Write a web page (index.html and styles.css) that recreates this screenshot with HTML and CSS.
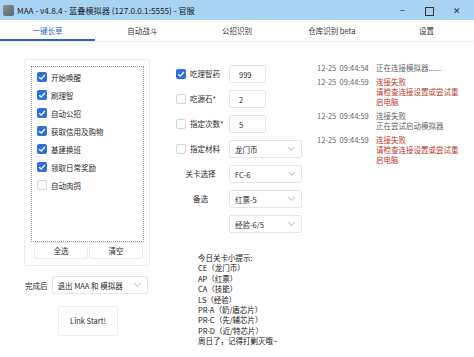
FILE: index.html
```html
<!DOCTYPE html>
<html lang="zh-CN">
<head>
  <meta charset="UTF-8">
  <title>MAA</title>
  <link rel="stylesheet" href="styles.css">
</head>
<body>

<!-- Title bar -->
<div class="titlebar">
  <div class="app-icon"></div>
  <div class="title">MAA - v4.8.4 - 蓝叠模拟器 (127.0.0.1:5555) - 官服</div>
  <div class="win-btns">
    <span class="win-btn">&#8722;</span>
    <span class="win-btn max"></span>
    <span class="win-btn">&#10005;</span>
  </div>
</div>

<!-- Tabs -->
<div class="tabs">
  <div class="tab active">一键长草</div>
  <div class="tab">自动战斗</div>
  <div class="tab">公招识别</div>
  <div class="tab">仓库识别 beta</div>
  <div class="tab">设置</div>
</div>

<div class="main">

  <!-- Task list -->
  <div class="left">
    <div class="task-card">
      <div class="task-list">
        <label class="check"><span class="box on"></span>开始唤醒</label>
        <label class="check"><span class="box on"></span>刷理智</label>
        <label class="check"><span class="box on"></span>自动公招</label>
        <label class="check"><span class="box on"></span>获取信用及购物</label>
        <label class="check"><span class="box on"></span>基建换班</label>
        <label class="check"><span class="box on"></span>领取日常奖励</label>
        <label class="check"><span class="box"></span>自动肉鸽</label>
      </div>
      <div class="task-btns">
        <div class="btn">全选</div>
        <div class="btn">清空</div>
      </div>
    </div>

    <div class="after">
      <span>完成后</span>
      <div class="select wide">退出 MAA 和 模拟器<span class="chev"></span></div>
    </div>

    <div class="start-wrap">
      <div class="btn start">Link Start!</div>
    </div>
  </div>

  <!-- Fight settings -->
  <div class="middle">
    <div class="row">
      <label class="check lbl"><span class="box on"></span>吃理智药</label>
      <div class="input">999</div>
    </div>
    <div class="row">
      <label class="check lbl"><span class="box"></span>吃源石*</label>
      <div class="input">2</div>
    </div>
    <div class="row">
      <label class="check lbl"><span class="box"></span>指定次数*</label>
      <div class="input">5</div>
    </div>
    <div class="row">
      <label class="check lbl"><span class="box"></span>指定材料</label>
      <div class="select">龙门币<span class="chev"></span></div>
    </div>
    <div class="row">
      <div class="lbl center">关卡选择</div>
      <div class="select">FC-6<span class="chev"></span></div>
    </div>
    <div class="row">
      <div class="lbl center">备选</div>
      <div class="select">红票-5<span class="chev"></span></div>
    </div>
    <div class="row">
      <div class="lbl"></div>
      <div class="select">经验-6/5<span class="chev"></span></div>
    </div>

    <div class="tips">
      今日关卡小提示:<br>
      CE（龙门币）<br>
      AP（红票）<br>
      CA（技能）<br>
      LS（经验）<br>
      PR-A（奶/盾芯片）<br>
      PR-C（先/辅芯片）<br>
      PR-D（近/特芯片）<br>
      周日了，记得打剿灭哦~
    </div>
  </div>

  <!-- Log -->
  <div class="log">
    <div class="entry">
      <span class="time">12-25&nbsp;&nbsp;09:44:54</span>
      <span class="msg">正在连接模拟器......</span>
    </div>
    <div class="entry">
      <span class="time">12-25&nbsp;&nbsp;09:44:59</span>
      <span class="msg error">连接失败<br>请检查连接设置或尝试重<br>启电脑</span>
    </div>
    <div class="entry">
      <span class="time">12-25&nbsp;&nbsp;09:44:59</span>
      <span class="msg">连接失败<br>正在尝试启动模拟器</span>
    </div>
    <div class="entry">
      <span class="time">12-25&nbsp;&nbsp;09:44:59</span>
      <span class="msg error">连接失败<br>请检查连接设置或尝试重<br>启电脑</span>
    </div>
  </div>

</div>

</body>
</html>
```

FILE: styles.css
```css
/* Base */
* {
  margin: 0;
  padding: 0;
  box-sizing: border-box;
}

body {
  width: 474px;
  height: 357px;
  overflow: hidden;
  background: #ffffff;
  color: #2a2a2a;
  font-family: "Noto Sans CJK SC", "Noto Sans", sans-serif;
  font-size: 7.5px;
}

/* Title bar */
.titlebar {
  height: 20px;
  background: #a8d3f3;
  display: flex;
  align-items: center;
  padding-left: 3px;
}

.app-icon {
  width: 11px;
  height: 11px;
  border-radius: 2px;
  background: linear-gradient(135deg, #8a8f96, #5d646d);
  margin-right: 3px;
}

.title {
  font-size: 8.2px;
  color: #1b1b1b;
  flex: 1;
}

.win-btns {
  display: flex;
  margin-right: 4px;
}

.win-btn {
  width: 27px;
  text-align: center;
  font-size: 9px;
  color: #333;
}

.win-btn.max::before {
  content: "";
  display: inline-block;
  width: 7px;
  height: 7px;
  border: 1px solid #333;
  vertical-align: middle;
}

/* Tabs */
.tabs {
  display: flex;
  height: 22px;
  border-bottom: 1px solid #eceff3;
}

.tab {
  flex: 1;
  text-align: center;
  line-height: 22px;
  color: #333;
}

.tab.active {
  color: #2f62c8;
  border-bottom: 2px solid #2f62c8;
}

/* Main */
.main {
  display: flex;
}

.left {
  width: 168px;
  padding: 17px 0 0 24px;
}

.task-card {
  width: 126px;
  border: 1px solid #ececec;
  border-radius: 3px;
  padding: 6px 5px 6px 6px;
}

.task-list {
  height: 176px;
  border: 1px dotted #9a9a9a;
  padding: 1px 0 0 5px;
}

.check {
  display: flex;
  align-items: center;
  height: 18px;
}

.box {
  width: 10px;
  height: 10px;
  border: 1px solid #d6d6d6;
  border-radius: 2px;
  margin-right: 4px;
  background: #fff;
}

.box.on {
  border: none;
  background: #2d6ee0 url("data:image/svg+xml,%3Csvg xmlns='http://www.w3.org/2000/svg' viewBox='0 0 10 10'%3E%3Cpath d='M2.2 5.2 L4.2 7.1 L7.9 3' fill='none' stroke='white' stroke-width='1.4'/%3E%3C/svg%3E") no-repeat center/10px;
}

.task-btns {
  display: flex;
  gap: 1px;
  padding: 0 1px 0 3px;
}

.btn {
  flex: 1;
  height: 17px;
  line-height: 16px;
  text-align: center;
  border: 1px solid #ececec;
  border-radius: 2px;
  background: #fff;
}

.after {
  display: flex;
  align-items: center;
  gap: 4px;
  margin-top: 10px;
  margin-left: 1px;
}

.select {
  position: relative;
  width: 73px;
  height: 18px;
  line-height: 17px;
  border: 1px solid #e6e6e6;
  border-radius: 2px;
  padding-left: 5px;
}

.select.wide {
  width: 96px;
}

.chev {
  position: absolute;
  right: 7px;
  top: 4px;
  width: 5px;
  height: 5px;
  border-right: 1px solid #c9c9c9;
  border-bottom: 1px solid #c9c9c9;
  transform: rotate(45deg);
}

.start-wrap {
  display: flex;
  padding-left: 34px;
  margin-top: 12px;
}

.start {
  flex: none;
  width: 60px;
  height: 30px;
  line-height: 28px;
}

/* Middle */
.middle {
  width: 149px;
  padding: 19px 0 0 4px;
}

.row {
  display: flex;
  align-items: center;
  height: 25px;
}

.lbl {
  width: 57px;
  padding-left: 4px;
}

.lbl.center {
  padding-left: 0;
  text-align: center;
}

.input {
  width: 37px;
  height: 18px;
  line-height: 17px;
  border: 1px solid #e6e6e6;
  border-radius: 2px;
  padding-left: 9px;
}

.tips {
  margin: 17px 0 0 26px;
  line-height: 10.4px;
  color: #111;
}

/* Log */
.log {
  padding: 21px 0 0 0;
}

.entry {
  display: flex;
  line-height: 10px;
  margin-bottom: 4px;
  color: #666;
}

.time {
  width: 59px;
}

.msg.error {
  color: #c0392b;
}
```
